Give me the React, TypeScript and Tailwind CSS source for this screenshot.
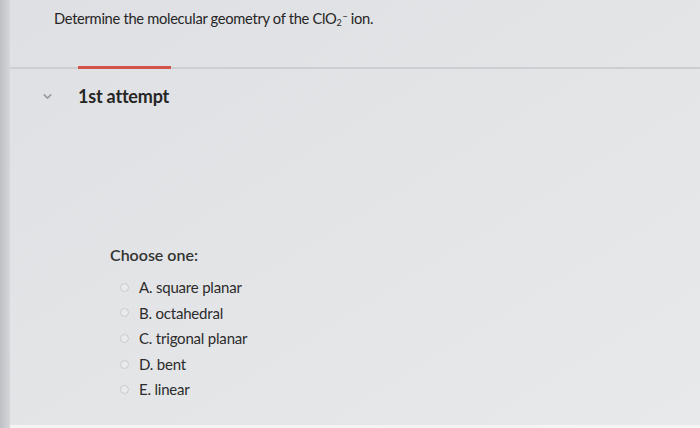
import { ChevronDown } from "lucide-react";

const options = ["A. square planar", "B. octahedral", "C. trigonal planar", "D. bent", "E. linear"];

export default function App() {
  return (
    <div
      className="w-[700px] h-[428px] flex overflow-hidden bg-[#e3e4e7] text-[#262626]"
      style={{ fontFamily: "Lato, 'Open Sans', sans-serif" }}
    >
      <div className="w-[10px] h-full bg-gradient-to-r from-[#bfc0c3] to-[#d6d7da]" />
      <div className="flex-1 flex flex-col bg-gradient-to-br from-[#dfe0e3] to-[#e8e9eb]">
        <div className="pl-[44px] pt-[9px] text-[14.7px] tracking-[-0.3px] leading-[18px]">
          Determine the molecular geometry of the ClO
          <sub className="text-[9px]">2</sub>
          <sup className="text-[9px] ml-[1px]">−</sup> ion.
        </div>

        <div className="mt-[40px] relative h-[2px] bg-[#cdced1]">
          <div className="absolute left-[68px] -top-[1px] w-[93px] h-[3px] bg-[#d4544c]" />
        </div>

        <div className="flex items-center mt-[15px] pl-[31px]">
          <ChevronDown className="w-[13px] h-[13px] text-[#9a9ca0]" strokeWidth={3} />
          <span className="ml-[24px] text-[18px] font-bold leading-[24px] tracking-[-0.2px]">1st attempt</span>
        </div>

        <div className="mt-[137px] pl-[100px] text-[16px] font-semibold text-[#333] leading-[20px]">Choose one:</div>

        <div className="mt-[12px] pl-[110px] flex flex-col gap-[5px]">
          {options.map((o) => (
            <div key={o} className="flex items-center h-[20.6px]">
              <span className="w-[9px] h-[9px] rounded-full border border-[#c9cacd] bg-[#e9eaec]" />
              <span className="ml-[10px] text-[15px] text-[#2b2b2b] tracking-[-0.2px]">{o}</span>
            </div>
          ))}
        </div>
        <div className="flex-1" />
        <div className="h-[3px] bg-[#f4f4f5]" />
      </div>
    </div>
  );
}
